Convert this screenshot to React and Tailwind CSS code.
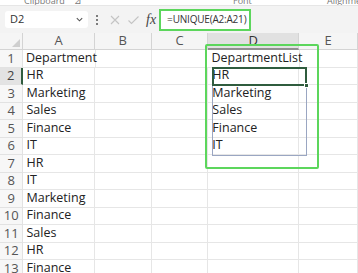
import React from "react";

const cols = [
  { key: "A", w: 73 },
  { key: "B", w: 58 },
  { key: "C", w: 58 },
  { key: "D", w: 93 },
  { key: "E", w: 60 },
];

const colA = [
  "Department",
  "HR",
  "Marketing",
  "Sales",
  "Finance",
  "IT",
  "HR",
  "IT",
  "Marketing",
  "Finance",
  "Sales",
  "HR",
  "Finance",
];

const colD = ["DepartmentList", "HR", "Marketing", "Sales", "Finance", "IT"];

const font = { fontFamily: '"Open Sans", "Noto Sans", sans-serif' };

function FormulaBar() {
  return (
    <div className="flex h-[27px] items-center bg-[#f3f3f3] pl-[5px]">
      <div className="flex h-[17px] w-[83px] items-center justify-between rounded-[3px] bg-white pl-[5px] pr-[4px] text-[11px] text-[#333]">
        <span>D2</span>
        <svg width="9" height="9" viewBox="0 0 10 10">
          <path d="M2 3.5 L5 6.5 L8 3.5" fill="none" stroke="#555" strokeWidth="1.2" />
        </svg>
      </div>
      <div className="ml-[5px] flex w-[8px] flex-col items-center gap-[2px]">
        <span className="h-[2px] w-[2px] rounded-full bg-[#555]" />
        <span className="h-[2px] w-[2px] rounded-full bg-[#555]" />
        <span className="h-[2px] w-[2px] rounded-full bg-[#555]" />
      </div>
      <svg className="ml-[8px]" width="12" height="12" viewBox="0 0 12 12">
        <path d="M2 2 L10 10 M10 2 L2 10" stroke="#c4c4c4" strokeWidth="1.1" />
      </svg>
      <svg className="ml-[6px]" width="13" height="12" viewBox="0 0 13 12">
        <path d="M1.5 6.5 L4.5 9.5 L11.5 2.5" fill="none" stroke="#c4c4c4" strokeWidth="1.1" />
      </svg>
      <span
        className="ml-[6px] text-[14px] italic text-[#444]"
        style={{ fontFamily: '"Liberation Serif", serif' }}
      >
        fx
      </span>
      <div className="ml-[3px] flex h-[22px] w-[92px] items-center whitespace-nowrap border-2 border-[#5cd65c] bg-white pl-[6px] text-[10px] tracking-[-0.2px] text-[#333]">
        =UNIQUE(A2:A21)
      </div>
    </div>
  );
}

function ColumnHeaders() {
  return (
    <div className="flex h-[17px] bg-[#f5f5f5]">
      <div className="relative w-[24px] border-b border-r border-[#d4d4d4]">
        <svg className="absolute bottom-[2px] right-[2px]" width="8" height="8" viewBox="0 0 8 8">
          <path d="M8 0 L8 8 L0 8 Z" fill="#cfcfcf" />
        </svg>
      </div>
      {cols.map((c) => (
        <div
          key={c.key}
          style={{ width: c.w }}
          className={
            c.key === "D"
              ? "flex items-center justify-center border-b-2 border-r border-b-[#8f8f8f] border-r-[#d4d4d4] bg-[#e1e1e1] text-[13px] text-[#333]"
              : "flex items-center justify-center border-b border-r border-[#d4d4d4] text-[13px] text-[#555]"
          }
        >
          {c.key}
        </div>
      ))}
    </div>
  );
}

function Row({ n }) {
  const active = n === 2;
  return (
    <div className="flex h-[17.5px]">
      <div
        className={
          active
            ? "flex w-[24px] items-center justify-center border-r-2 border-b border-r-[#2f5c3e] border-b-[#e2e2e2] bg-[#e3e3e3] text-[13px] text-[#444]"
            : "flex w-[24px] items-center justify-center border-b border-r border-[#e2e2e2] bg-[#f7f7f7] text-[13px] text-[#555]"
        }
      >
        {n}
      </div>
      {cols.map((c) => (
        <div
          key={c.key}
          style={{ width: c.w }}
          className={
            c.key === "D"
              ? "flex items-center overflow-visible whitespace-nowrap border-b border-r border-[#e6e6e6] pl-[4px] text-[12.5px] text-[#222]"
              : "flex items-center overflow-visible whitespace-nowrap border-b border-r border-[#e6e6e6] pl-[3px] text-[12.5px] text-[#222]"
          }
        >
          {c.key === "A" ? colA[n - 1] : c.key === "D" ? colD[n - 1] || "" : ""}
        </div>
      ))}
    </div>
  );
}

export default function App() {
  return (
    <div className="relative h-[273px] w-[358px] overflow-hidden bg-white" style={font}>
      <div className="relative h-[6px] overflow-hidden border-b border-[#e6e6e6] bg-white text-[9px] leading-[10px] text-[#777]">
        <span className="absolute left-[24px] top-[-4px]">Clipboard</span>
        <span className="absolute left-[74px] top-[-4px]">⊿</span>
        <span className="absolute left-[233px] top-[-4px]">Font</span>
        <span className="absolute left-[327px] top-[-4px]">Alignment</span>
      </div>
      <FormulaBar />
      <ColumnHeaders />
      <div className="relative">
        {colA.map((_, i) => (
          <Row key={i} n={i + 1} />
        ))}
        {/* spill range D2:D6 */}
        <div className="pointer-events-none absolute left-[212px] top-[17.5px] h-[88px] w-[95px] border border-[#9aa6c2]" />
        {/* active cell D2 */}
        <div className="pointer-events-none absolute left-[212px] top-[17px] h-[19px] w-[95px] border-2 border-[#2f5c3e]" />
        <div className="pointer-events-none absolute left-[304px] top-[33px] h-[5px] w-[5px] border border-white bg-[#2f5c3e]" />
      </div>
      {/* annotation box */}
      <div className="pointer-events-none absolute left-[205px] top-[44px] h-[125px] w-[114px] rounded-[2px] border-2 border-[#5cd65c]" />
    </div>
  );
}
